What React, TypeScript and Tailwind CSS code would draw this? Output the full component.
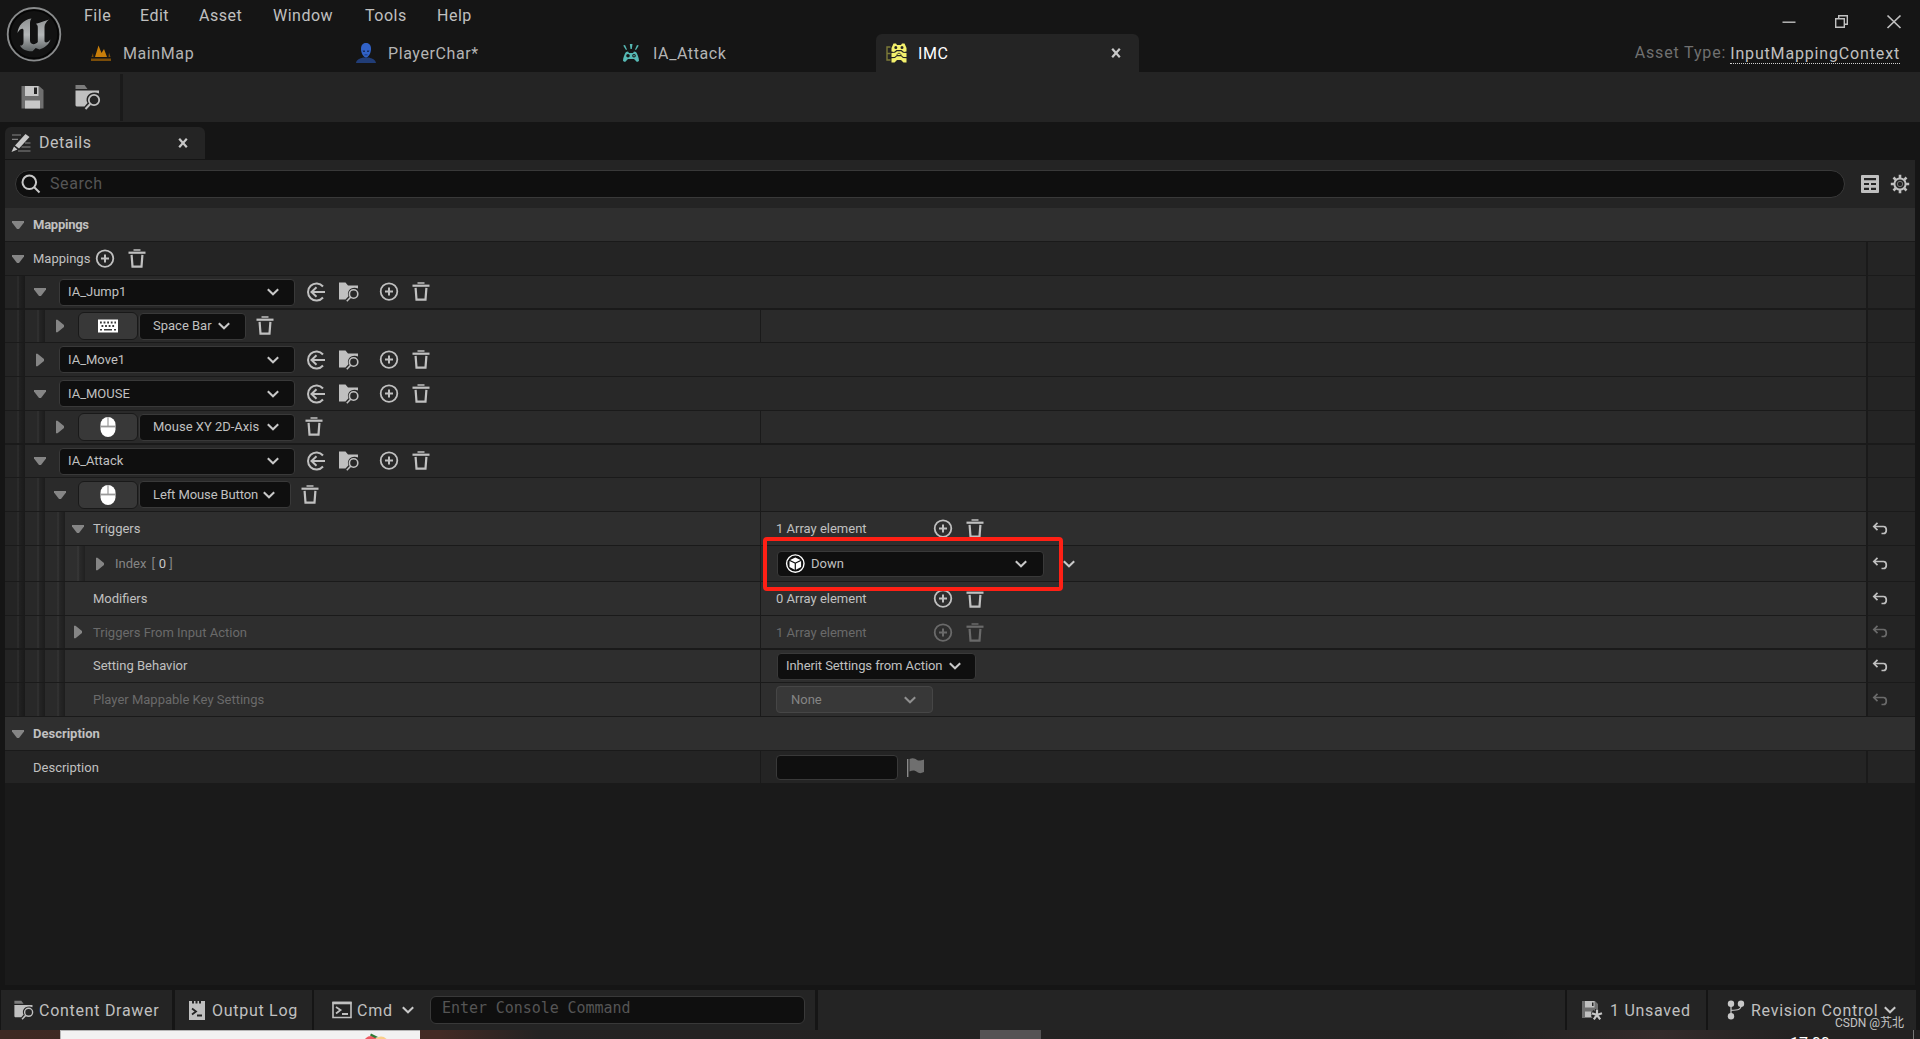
import { ReactNode } from "react";
import clsx from "clsx";

interface IconProps {
  className?: string;
}

/* ---------- Icons ---------- */

function UnrealLogo() {
  return (
    <svg width="56" height="56" viewBox="6.5 6 56 56" fill="none">
      <defs>
        <linearGradient id="metal" x1="0" y1="0" x2="0" y2="1">
          <stop offset="0" stopColor="#8f9293" />
          <stop offset="0.5" stopColor="#b3b6b7" />
          <stop offset="1" stopColor="#5c6162" />
        </linearGradient>
      </defs>
      <circle cx="34.5" cy="34.3" r="26.3" fill="#121212" stroke="#8a8c8d" strokeWidth="1.8" />
      <circle cx="34.5" cy="34.3" r="24" stroke="#050505" strokeWidth="1.5" />
      <path
        d="M32 18.5C24 19.5 18.5 26 18 33C20 29 23.5 27.5 24 30V42C24 45 22 46 20.5 45.5C23 50 28 51.5 33 51.3L36.2 48L40 49.5C45 48 49.5 44.5 51 39.5C48.5 42.5 45.5 43.5 45 41V27C45 24 47 21.5 49.5 19.5C46 20.5 41.5 22.5 36.5 23.8C38 25 38.3 26 38.3 28V42C36.5 44 34 45 32 43.5C31 43 30.5 42 30.5 40V23C30.5 21 31 20 32 18.5Z"
        fill="url(#metal)"
      />
    </svg>
  );
}

function LevelIcon() {
  return (
    <svg width="20" height="20" viewBox="0 0 20 20">
      <path d="M4 14L7.5 2.5L10.5 10L13 6L16 14Z" fill="#c87e0a" />
      <path d="M0 15.5H20V18H0Z" fill="#7a4d09" />
      <path d="M0.5 14L2 10L2.5 14ZM17.5 14L18 9.5L19.5 14Z" fill="#7a4d09" />
    </svg>
  );
}

function PawnIcon() {
  return (
    <svg width="20" height="20" viewBox="0 0 20 20">
      <path d="M0 20C0.5 16.5 4 15.5 7 14.5H13C16 15.5 19.5 16.5 20 20Z" fill="#213d77" />
      <path d="M10 0C13.5 0 15 2.5 15 6C15 10 12.5 14.5 10 14.5C7.5 14.5 5 10 5 6C5 2.5 6.5 0 10 0Z" fill="#3162c8" />
      <path d="M6.5 7.5H9V9H7.2ZM11 7.5H13.5L12.8 9H11ZM8.5 11.5H11.5V12.3H8.5Z" fill="#162d5e" />
    </svg>
  );
}

function ActionIcon() {
  return (
    <svg width="20" height="20" viewBox="0 0 20 20" fill="#56b8b3">
      <path d="M2.2 2.5L4 2L6 6.5L5 7ZM8.8 1H11.5L10.8 6H9.5ZM16 2L17.8 2.5L15 7L14 6.5Z" />
      <path
        fillRule="evenodd"
        d="M5 9L7 8.5L8 10H12L13 8.5L15 9C16.5 11 18 15 18 18L16 19L13 16H7L4 19L2 18C2 15 3.5 11 5 9ZM7 11A1.8 1.8 0 1 0 7 14.6A1.8 1.8 0 1 0 7 11ZM13 11A1.8 1.8 0 1 0 13 14.6A1.8 1.8 0 1 0 13 11Z"
      />
      <circle cx="13" cy="12.8" r="0.8" />
    </svg>
  );
}

function ContextIcon() {
  return (
    <svg width="21" height="20" viewBox="0 0 21 20">
      <path d="M4.5 4H1V17H4.5M1 10.5H4.5" fill="none" stroke="#7d7b38" strokeWidth="1.4" />
      <g fill="#f4f16c">
        <path
          fillRule="evenodd"
          d="M7.5 0.5H10L11 2H15L16 0.5H18.5L20.5 5V8.5L18 9L15.5 7H10.5L8 9L5.5 8.5V5ZM9.8 3A1.5 1.5 0 1 0 9.8 6A1.5 1.5 0 1 0 9.8 3ZM16 3A1.5 1.5 0 1 0 16 6A1.5 1.5 0 1 0 16 3Z"
        />
        <path d="M5.5 10L9 9.8L11 8.2H15L17 9.8L20.5 10V14H17.5L15 12H11L8.5 14H5.5Z" />
        <path d="M5.5 15.2L9 15L11 13.3H15L17 15L20.5 15.2V19.5H17.5L15 17H11L8.5 19.5H5.5Z" />
      </g>
      <path d="M10.5 11.8L13 10L15.5 11.8" fill="none" stroke="#242424" strokeWidth="0.8" />
    </svg>
  );
}

function SaveIcon() {
  return (
    <svg width="24" height="24" viewBox="0 0 24 24">
      <path d="M1.5 1H19L23.5 5V23.500H1.5Z" fill="#6f6f6f" />
      <path d="M5 1H18.5V11H5ZM5 15.5H20V23.5H5Z" fill="#c8c8c8" />
      <path d="M14 2.5H17V9H14Z" fill="#242424" />
    </svg>
  );
}

function BrowseIcon({ size = 26 }: { size?: number }) {
  return (
    <svg width={size} height={size} viewBox="0 0 26 26" fill="none">
      <path d="M0.5 1H9.5L12.5 5H0.5Z" fill="#7c7c7c" />
      <path d="M0.5 6.5H24V9.5C20 7.500 14 8.500 12 13C11.200 15.500 11.500 17.500 12.500 19L9.500 22.500H1.500L0.500 21.500Z" fill="#c0c0c0" />
      <circle cx="19" cy="16" r="5.2" stroke="#c0c0c0" strokeWidth="1.8" />
      <path d="M15.2 20L10.5 25" stroke="#c0c0c0" strokeWidth="2" />
    </svg>
  );
}

function BrowseAssetIcon() {
  return (
    <svg width="20" height="20" viewBox="0 0 20 20" fill="none">
      <path d="M0 0.5H6.5L9 3.5H19V6.500C16 5 11.5 5.5 9.6 9C8.600 11 8.800 12.800 9.500 14.300L6.500 17.500H0Z" fill="#c0c0c0" />
      <circle cx="14.6" cy="12" r="4.200" stroke="#c0c0c0" strokeWidth="1.600" />
      <path d="M11.800 15L7.800 19.300" stroke="#c0c0c0" strokeWidth="1.600" />
    </svg>
  );
}

function UseSelectedIcon() {
  return (
    <svg width="20" height="20" viewBox="0 0 20 20" fill="none" stroke="#c0c0c0" strokeWidth="2">
      <path d="M17 4.500A8.500 8.500 0 1 0 17 15.500" />
      <path d="M19 10H6M10.500 5.200L5.500 10L10.500 14.800" />
    </svg>
  );
}

function PlusIcon({ className = "text-[#c0c0c0]" }: IconProps) {
  return (
    <svg width="20" height="20" viewBox="0 0 20 20" fill="none" stroke="currentColor" className={className}>
      <circle cx="10" cy="9.6" r="8.3" strokeWidth="1.8" />
      <path d="M10 5.6V13.6M6 9.6H14" strokeWidth="2" />
    </svg>
  );
}

function TrashIcon({ className = "text-[#c0c0c0]" }: IconProps) {
  return (
    <svg width="20" height="20" viewBox="0 0 20 20" fill="none" className={className}>
      <path d="M6.500 0H13.500V2H6.500Z" fill="currentColor" opacity="0.75" />
      <path d="M1.500 2.600H18.500V4.800H1.500Z" fill="currentColor" />
      <path d="M4.600 5.800L5.500 17.600H14.500L15.400 5.800" stroke="currentColor" strokeWidth="2.200" />
    </svg>
  );
}

function Chevron({ className = "text-[#c8c8c8]" }: IconProps) {
  return (
    <svg width="12" height="8" viewBox="0 0 12 8" fill="none" stroke="currentColor" className={clsx("shrink-0", className)}>
      <path d="M0.8 1.2L6 6.3L11.2 1.2" strokeWidth="2" />
    </svg>
  );
}

function Arrow({ open }: { open: boolean }) {
  return (
    <svg width="12" height="14" viewBox="0 0 12 14" fill="#858585" className="shrink-0">
      {open ? <path d="M0 3H12V4.5L7 11H5L0 4.5Z" /> : <path d="M2 0.8H3.5L10 6V8L3.5 13.2H2Z" />}
    </svg>
  );
}

function ResetIcon({ className }: IconProps) {
  return (
    <svg width="16" height="14" viewBox="0 0 16 14" fill="none" stroke="currentColor" strokeWidth="1.7" className={className}>
      <path d="M5.5 0.8L1.8 4.5L5.5 8.2M1.8 4.5H11.5C13.5 4.5 14.3 5.7 14.3 7.9C14.3 10.2 13.3 11.5 11.5 11.5H9.5" />
    </svg>
  );
}

function KeyboardIcon() {
  return (
    <svg width="20" height="14" viewBox="0 0 20 14">
      <path d="M0 0.5H20V13.5H0Z" fill="#fff" />
      <path d="M2 3.500H18M3.500 7H17" stroke="#383838" strokeWidth="1.800" strokeDasharray="1.800 1.800" fill="none" />
      <path d="M2 10.700H4M6 10.700H14M16 10.700H18" stroke="#383838" strokeWidth="1.500" />
    </svg>
  );
}

function MouseIcon() {
  return (
    <svg width="16" height="20" viewBox="0 0 16 20">
      <rect x="0.5" width="15" height="20" rx="7.5" fill="#fff" />
      <path d="M0.5 9.5H15.5" stroke="#9a9a9a" strokeWidth="1.8" />
      <path d="M8 0V9" stroke="#9a9a9a" strokeWidth="1.2" />
    </svg>
  );
}

function ClassIcon() {
  return (
    <svg width="20" height="20" viewBox="0 0 20 20" fill="none">
      <circle cx="10.3" cy="9.6" r="8.7" stroke="#fff" strokeWidth="1.4" />
      <path d="M10.3 3.4L15.5 5.900L10.300 8.600L5.100 5.900ZM4.500 7L9.700 9.600V15.800L4.500 13.100ZM16.100 7L10.900 9.600V15.800L16.100 13.100Z" fill="#fff" />
    </svg>
  );
}

function DetailsIcon() {
  return (
    <svg width="20" height="20" viewBox="0 0 20 20">
      <path d="M1 2H10M1 6.3H7M14 10H19.5M10.5 14H19.5M7 18H19.5" stroke="#858585" strokeWidth="1.2" />
      <path d="M14.5 1L18.5 4L8 15.5L4 12.5ZM3 13.5L6.5 16.5L0.5 19Z" fill="#c8c8c8" />
    </svg>
  );
}

function GearIcon() {
  return (
    <svg width="20" height="20" viewBox="0 0 20 20" fill="none" stroke="#c0c0c0">
      <circle cx="10" cy="10" r="5.6" strokeWidth="2" />
      <circle cx="10" cy="10" r="2.7" stroke="#777" strokeWidth="1" />
      <path
        d="M10 4V0.8M10 16V19.2M4 10H0.8M16 10H19.2M5.8 5.8L3.5 3.5M14.2 5.8L16.5 3.5M5.8 14.2L3.5 16.5M14.2 14.2L16.5 16.5"
        strokeWidth="2.6"
      />
    </svg>
  );
}

function TableIcon() {
  return (
    <svg width="18" height="18" viewBox="0 0 18 18">
      <rect width="18" height="18" rx="1" fill="#c0c0c0" />
      <path d="M3 3H15V5.2H3ZM3 8H8V10H3ZM10 8H15V10H10ZM3 12.8H8V15H3ZM10 12.8H15V15H10Z" fill="#242424" />
    </svg>
  );
}

function CloseIcon() {
  return (
    <svg width="10" height="10" viewBox="0 0 10 10" stroke="#c8c8c8" strokeWidth="2.2">
      <path d="M1.2 0.8L8.8 9.2M8.8 0.8L1.2 9.2" />
    </svg>
  );
}

/* ---------- Layout helpers ---------- */

// background of a row (and of the gutter it leaves) for each nesting level
const DEPTH_BG = ["bg-[#242424]", "bg-[#282828]", "bg-[#2a2a2a]", "bg-[#2e2e2e]", "bg-[#2a2a2a]"];

interface RowProps {
  depth?: number;
  height: string;
  thick?: boolean;
  last?: boolean;
  value?: ReactNode;
  reset?: "on" | "off";
  children: ReactNode;
}

function Row({ depth = 0, height, thick, last, value, reset, children }: RowProps) {
  return (
    <div className={clsx("flex border-[#1a1a1a]", height, last ? "" : thick ? "border-b-2" : "border-b")}>
      {DEPTH_BG.slice(0, depth).map((bg, i) => (
        <div
          key={i}
          className={clsx(
            "w-5 shrink-0 bg-[linear-gradient(to_right,transparent_60%,rgba(255,255,255,0.03)_61%,rgba(255,255,255,0.03)_69%,rgba(0,0,0,0.08)_72%,rgba(0,0,0,0.3)_100%)]",
            bg
          )}
        />
      ))}
      <div className={clsx("flex min-w-0 flex-1", DEPTH_BG[depth])}>
        <div className="flex min-w-0 flex-1 items-center">{children}</div>
        {value !== undefined && (
          <div className="flex w-[1106px] shrink-0 items-center border-l border-[#1a1a1a] pl-[15px]">{value}</div>
        )}
      </div>
      <div className="flex w-[49px] shrink-0 items-center border-l-2 border-[#1a1a1a] bg-[#242424] pl-1">
        {reset && <ResetIcon className={reset === "on" ? "text-[#c0c0c0]" : "text-[#6a6a6a]"} />}
      </div>
    </div>
  );
}

function Category({ title }: { title: string }) {
  return (
    <div className="flex h-[34px] items-center border-b border-[#1a1a1a] bg-[#2f2f2f] pl-[7px]">
      <Arrow open />
      <span className={clsx("ml-[9px] font-bold", title === "Mappings" && "tracking-[-0.25px]")}>{title}</span>
    </div>
  );
}

function ActionRow({ name, open, height, thick }: { name: string; open: boolean; height: string; thick?: boolean }) {
  return (
    <Row depth={1} height={height} thick={thick}>
      <div className="flex items-center pl-[9px]">
        <Arrow open={open} />
        <div className="ml-[13px] flex h-[27px] w-[236px] items-center justify-between rounded border border-[#393939] bg-[#0f0f0f] pr-[15px] pl-2">
          <span>{name}</span>
          <Chevron />
        </div>
        <div className="ml-[11px] flex items-center">
          <UseSelectedIcon />
          <span className="ml-[13px]"><BrowseAssetIcon /></span>
          <span className="ml-5"><PlusIcon /></span>
          <span className="ml-3"><TrashIcon /></span>
        </div>
      </div>
    </Row>
  );
}

interface KeyRowProps {
  label: string;
  device: "keyboard" | "mouse";
  width: string;
  open?: boolean;
  height: string;
  thick?: boolean;
}

function KeyRow({ label, device, width, open = false, height, thick }: KeyRowProps) {
  return (
    <Row depth={2} height={height} thick={thick} value={null}>
      <div className="flex items-center pl-[9px]">
        <Arrow open={open} />
        <div className="ml-3 flex h-7 w-[60px] items-center justify-center rounded-md border border-[#191919] bg-[#383838]">
          {device === "keyboard" ? <KeyboardIcon /> : <MouseIcon />}
        </div>
        <div
          className={clsx(
            "ml-px flex h-[27px] items-center justify-between rounded border border-[#393939] bg-[#0f0f0f] pr-[15px] pl-[13px]",
            width
          )}
        >
          <span className={clsx(label.startsWith("Left") && "tracking-[-0.1px]")}>{label}</span>
          <Chevron />
        </div>
        <span className="ml-[9px]"><TrashIcon /></span>
      </div>
    </Row>
  );
}

function ArrayValue({ count, disabled }: { count: number; disabled?: boolean }) {
  const tone = disabled ? "text-[#6a6a6a]" : "text-[#c0c0c0]";
  return (
    <div className={clsx("flex items-center", tone, disabled && "pt-px")}>
      <span className="w-[157px]">{count} Array element</span>
      <PlusIcon className={tone} />
      <span className="ml-3"><TrashIcon className={tone} /></span>
    </div>
  );
}

/* ---------- Sections ---------- */

const MENU = [
  { label: "File", width: "w-14" },
  { label: "Edit", width: "w-[59px]" },
  { label: "Asset", width: "w-[74px]" },
  { label: "Window", width: "w-[92px]" },
  { label: "Tools", width: "w-[72px]" },
  { label: "Help", width: "w-[60px]" },
];

const TABS = [
  { label: "MainMap", icon: <LevelIcon /> },
  { label: "PlayerChar*", icon: <PawnIcon /> },
  { label: "IA_Attack", icon: <ActionIcon /> },
  { label: "IMC", icon: <ContextIcon />, active: true },
];

function TitleBar() {
  return (
    <header className="flex h-[72px] bg-[#151515] text-base tracking-[0.5px]">
      <div className="w-[81px] pt-1.5 pl-1.5">
        <UnrealLogo />
      </div>
      <div className="flex-1">
        <div className="flex h-[34px] justify-between">
          <nav className="flex h-[31px] items-center pl-[3px]">
            {MENU.map((m) => (
              <span key={m.label} className={m.width}>{m.label}</span>
            ))}
          </nav>
          <svg width="140" height="34" viewBox="0 0 140 34" fill="none" stroke="#c0c0c0" strokeWidth="1.4">
            <path d="M2.500 22.200H15.500" />
            <path d="M55.7 18.7H64.3V27.3H55.7ZM58.7 18V15.7H67.3V24.3H65" />
            <path d="M107.5 15.5L120.5 28M120.5 15.5L107.5 28" strokeWidth="1.7" />
          </svg>
        </div>
        <div className="flex h-[38px] justify-between">
          <div className="flex gap-0.5">
            {TABS.map((tab) => (
              <div
                key={tab.label}
                className={clsx(
                  "flex w-[263px] items-center rounded-t-md pl-2.5",
                  tab.active ? "bg-[#242424] text-white" : "text-[#b4b4b4]"
                )}
              >
                <span className="w-8">{tab.icon}</span>
                <span className="flex-1 pt-0.5 tracking-[0.6px]">{tab.label}</span>
                {tab.active && <span className="mr-[18px]"><CloseIcon /></span>}
              </div>
            ))}
          </div>
          <div className="flex items-center pr-5 tracking-[0.84px] text-[#707070]">
            <span className="mr-1">Asset Type:</span>
            <span className="-mb-px border-b border-dotted border-[#d0d0d0] leading-[19px] text-[#c0c0c0]">
              InputMappingContext
            </span>
          </div>
        </div>
      </div>
    </header>
  );
}

function StatusBar() {
  return (
    <footer className="flex h-10 bg-[#151515] pr-1 pl-px text-base tracking-[0.72px]">
      <div className="flex w-[171px] items-center bg-[#242424] pl-[13px]">
        <BrowseIcon size={20} />
        <span className="ml-[5px] pt-px whitespace-nowrap">Content Drawer</span>
      </div>
      <div className="ml-[3px] flex w-[137px] items-center bg-[#242424] pl-[13px]">
        <svg width="18" height="20" viewBox="0 0 18 20">
          <path d="M1 1H4V3.5H6V1H7.5V3.5H9.5V1H11V3.5H13V1H17V20H1Z" fill="#c0c0c0" />
          <path d="M4 8.5L8 11.5L4 14.5M9 15.5H14" stroke="#242424" strokeWidth="1.8" fill="none" />
        </svg>
        <span className="ml-[6px] pt-px">Output Log</span>
      </div>
      <div className="ml-0.5 flex w-[501px] items-center bg-[#242424] pl-[18px]">
        <svg width="20" height="18" viewBox="0 0 20 18" fill="none" stroke="#c0c0c0">
          <path d="M1 1.5H19V16.5H1Z" strokeWidth="1.6" />
          <path d="M0.5 2H19.5" strokeWidth="2.6" />
          <path d="M4 6L8.5 9L4 12.5M10 13H16" strokeWidth="1.8" />
        </svg>
        <span className="ml-[5px] w-[45px] pt-px">Cmd</span>
        <Chevron />
        <div className="ml-4 h-7 w-[375px] rounded-md border border-[#393939] bg-[#0f0f0f] pl-[11px] font-['DejaVu_Sans_Mono',monospace] text-[15px] leading-[22px] tracking-[-0.06px] text-[#555]">
          Enter Console Command
        </div>
      </div>
      <div className="ml-[3px] flex-1 bg-[#242424]" />
      <div className="ml-0.5 flex w-[139px] items-center bg-[#242424] pl-[15px]">
        <svg width="21" height="21" viewBox="0 0 21 21">
          <path d="M0 1H13L16 4V18H0Z" fill="#6f6f6f" />
          <path d="M3 1H12.5V7.5H3ZM3 11.5H9V17H3Z" fill="#c0c0c0" />
          <path d="M10 2.5H11.5V6H10Z" fill="#242424" />
          <path d="M15 9V20M10.2 11.7L19.8 17.3M10.2 17.3L19.8 11.7" stroke="#242424" strokeWidth="4" />
          <path d="M15 9.5V15L20 13.2M15 15L18.2 19.3M15 15L11.8 19.3M15 15L10 13.2" stroke="#c8c8c8" strokeWidth="2.2" fill="none" />
        </svg>
        <span className="ml-[7px] pt-px">1 Unsaved</span>
      </div>
      <div className="ml-0.5 flex w-[208px] items-center bg-[#242424] pl-[19px]">
        <svg width="18" height="20" viewBox="0 0 18 20" fill="none">
          <path d="M4 4V16M14 4V6C14 9 12 10.3 4 10.3" stroke="#c0c0c0" strokeWidth="1.3" />
          <g fill="#c8c8c8">
            <circle cx="4" cy="3.8" r="3.2" />
            <circle cx="14" cy="3.8" r="3.2" />
            <circle cx="4" cy="16.2" r="3.2" />
          </g>
        </svg>
        <span className="mr-[6px] ml-[6px] pt-px whitespace-nowrap">Revision Control</span>
        <Chevron />
      </div>
    </footer>
  );
}

// sliver of the desktop under the editor window
function Desktop() {
  return (
    <div className="flex h-[9px] overflow-hidden bg-[linear-gradient(to_right,#3e2923_0px,#432a24_440px,#242222_540px,#262122_700px,#242222_1000px,#242121_1500px,#342b2b_1660px,#232020_1800px)]">
      <div className="ml-[60px] h-[9px] w-[360px] overflow-hidden border-t border-l border-[#b5b5b5] bg-[#f2f2f2]">
        <svg width="30" height="9" viewBox="0 0 30 9" className="ml-[300px]">
          <circle cx="10" cy="12.5" r="7.5" fill="#ee5a62" />
          <circle cx="20" cy="13" r="7.5" fill="#f9cf8a" />
          <path d="M10 2.500L17 6L14 7L9 4.500Z" fill="#2f7a35" />
        </svg>
      </div>
      <div className="ml-[560px] w-[61px] bg-[#555354]" />
      <div className="ml-[749px] h-[9px] w-[124px] overflow-hidden border-r border-[#777] pt-[4px] text-base leading-5 text-white">
        17:00
      </div>
    </div>
  );
}

export default function App() {
  return (
    <div className="relative flex h-[1039px] w-[1920px] flex-col overflow-hidden bg-[#151515] font-['Roboto','Noto_Sans_CJK_SC',sans-serif] text-[13px] text-[#c0c0c0]">
      <TitleBar />

      {/* Toolbar */}
      <div className="flex h-[50px] items-center bg-[#242424]">
        <div className="flex h-[47px] w-[123px] items-center border-r-[3px] border-[#1a1a1a] pl-5">
          <SaveIcon />
          <span className="ml-[30.5px]"><BrowseIcon /></span>
        </div>
      </div>

      {/* Panel tab */}
      <div className="flex h-[38px] items-end px-[5px]">
        <div className="mb-px flex h-8 w-[200px] items-center rounded-t-md bg-[#242424] pl-1.5 text-base tracking-[0.5px]">
          <DetailsIcon />
          <span className="ml-2 flex-1">Details</span>
          <span className="mr-[17px]"><CloseIcon /></span>
        </div>
      </div>

      {/* Details panel */}
      <main className="mx-[5px] h-[825px] bg-[#1a1a1a]">
        <div className="flex h-12 items-center bg-[#242424] pl-2.5">
          <div className="flex h-7 w-[1830px] items-center rounded-full border border-[#393939] bg-[#0f0f0f] pl-[5px] text-base tracking-[0.6px] text-[#555]">
            <svg width="20" height="20" viewBox="0 0 20 20" fill="none" stroke="#c8c8c8" strokeWidth="2">
              <circle cx="8.3" cy="8.3" r="6.8" />
              <path d="M13 13L18.5 18.5" />
            </svg>
            <span className="ml-[9px]">Search</span>
          </div>
          <span className="ml-4"><TableIcon /></span>
          <span className="ml-[11px]"><GearIcon /></span>
        </div>

        <Category title="Mappings" />
        <Row height="h-[34px]">
          <div className="flex items-center pl-[7px]">
            <Arrow open />
            <span className="ml-[9px] w-[62px]">Mappings</span>
            <PlusIcon />
            <span className="ml-3"><TrashIcon /></span>
          </div>
        </Row>
        <ActionRow name="IA_Jump1" open height="h-[34px]" thick />
        <KeyRow label="Space Bar" device="keyboard" width="w-[107px]" height="h-[33px]" />
        <ActionRow name="IA_Move1" open={false} height="h-[34px]" />
        <ActionRow name="IA_MOUSE" open height="h-[34px]" />
        <KeyRow label="Mouse XY 2D-Axis" device="mouse" width="w-[156px]" height="h-[34px]" thick />
        <ActionRow name="IA_Attack" open height="h-[33px]" />
        <KeyRow label="Left Mouse Button" device="mouse" width="w-[152px]" open height="h-[34px]" />

        <Row depth={3} height="h-[34px]" reset="on" value={<ArrayValue count={1} />}>
          <div className="flex items-center pl-[7px]">
            <Arrow open />
            <span className="ml-[9px]">Triggers</span>
          </div>
        </Row>
        <Row
          depth={4}
          height="h-9"
          reset="on"
          value={
            <div className="flex items-center">
              <div className="ml-px flex h-[26px] w-[267px] items-center rounded border border-[#393939] bg-[#0f0f0f] pr-4 pl-[7px]">
                <ClassIcon />
                <span className="ml-1.5 flex-1">Down</span>
                <Chevron />
              </div>
              <Chevron className="ml-[19px] text-[#c8c8c8]" />
            </div>
          }
        >
          <div className="flex items-center pl-[9px] text-[#858585]">
            <Arrow open={false} />
            <span className="ml-[9px]">Index</span>
            <span className="ml-[5px]">[</span>
            <span className="ml-[4px] text-[#c8c8c8]">0</span>
            <span className="ml-[3px]">]</span>
          </div>
        </Row>
        <Row depth={3} height="h-[34px]" reset="on" value={<ArrayValue count={0} />}>
          <span className="pl-7">Modifiers</span>
        </Row>
        <Row depth={3} height="h-[34px]" thick reset="off" value={<ArrayValue count={1} disabled />}>
          <div className="flex items-center pl-[7px] text-[#6a6a6a]">
            <Arrow open={false} />
            <span className="ml-[9px] pt-px">Triggers From Input Action</span>
          </div>
        </Row>
        <Row
          depth={3}
          height="h-[33px]"
          reset="on"
          value={
            <div className="ml-px flex h-[27px] w-[199px] items-center justify-between rounded border border-[#393939] bg-[#0f0f0f] pr-[14px] pl-2">
              <span className="tracking-[-0.08px]">Inherit Settings from Action</span>
              <Chevron />
            </div>
          }
        >
          <span className="pl-7">Setting Behavior</span>
        </Row>
        <Row
          depth={3}
          height="h-[34px]"
          reset="off"
          value={
            <div className="flex h-[27px] w-[157px] items-center justify-between rounded border border-[#464646] bg-[#383838] pr-4 pl-[14px] text-[#858585]">
              <span>None</span>
              <Chevron className="text-[#909090]" />
            </div>
          }
        >
          <span className="pl-7 text-[#6a6a6a]">Player Mappable Key Settings</span>
        </Row>

        <Category title="Description" />
        <Row
          height="h-8"
          last
          value={
            <div className="flex items-center pt-px">
              <div className="h-[25px] w-[122px] rounded border border-[#393939] bg-[#0f0f0f]" />
              <svg width="20" height="20" viewBox="0 0 20 20" className="ml-2">
                <path d="M1.7 1V19" stroke="#8a8a8a" strokeWidth="1.4" />
                <path d="M3.5 1C7 -0.5 9 0.5 11 2C13 3 15 2.5 18 1.5V14C15 15.5 13 15.5 11 14C9 12.5 7 12 3.5 13.5Z" fill="#6f6f6f" />
              </svg>
            </div>
          }
        >
          <span className="pt-px pl-7">Description</span>
        </Row>
      </main>

      <div className="h-[5px]" />
      <StatusBar />
      <Desktop />

      {/* Annotation box and watermark lie over the window */}
      <div className="absolute top-[537px] left-[763px] h-[54px] w-[300px] rounded-[4px] border-4 border-[#ff2015]" />
      <div className="absolute top-[1014px] left-[1835px] text-xs leading-[18px] text-[#c4c4c4]">CSDN @艽北</div>
    </div>
  );
}
